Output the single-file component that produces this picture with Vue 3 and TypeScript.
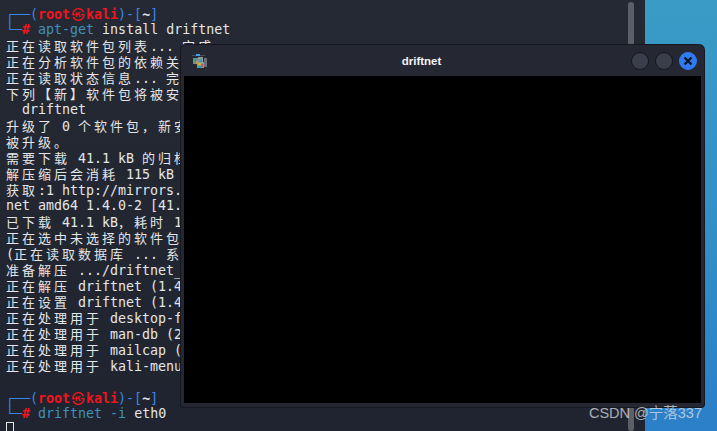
<script setup lang="ts">
type Run = { text: string; cjk: boolean }

const outputBefore: string[] = [
  '正在读取软件包列表... 完成',
  '正在分析软件包的依赖关',
  '正在读取状态信息... 完',
  '下列【新】软件包将被安',
  '  driftnet',
  '升级了 0 个软件包，新安',
  '被升级。',
  '需要下载 41.1 kB 的归档',
  '解压缩后会消耗 115 kB',
  '获取:1 http://mirrors.',
  'net amd64 1.4.0-2 [41.',
  '已下载 41.1 kB，耗时 1',
  '正在选中未选择的软件包',
  '(正在读取数据库 ... 系',
  '准备解压 .../driftnet_',
  '正在解压 driftnet (1.4',
  '正在设置 driftnet (1.4',
  '正在处理用于 desktop-f',
  '正在处理用于 man-db (2',
  '正在处理用于 mailcap (',
  '正在处理用于 kali-menu',
  ' ',
]

function split(line: string): Run[] {
  return line
    .split(/([\u3000-\u9fff\uff00-\uffef]+)/)
    .filter((t) => t.length > 0)
    .map((text) => ({ text, cjk: /[\u3000-\u9fff\uff00-\uffef]/.test(text) }))
}

const lines = outputBefore.map(split)

const iconPixels: [number, number, number, number, string][] = [
  [4, 0, 4, 2, '#3f9fe0'],
  [0, 1, 4, 1, '#4a4f5c'],
  [8, 1, 5, 1, '#4a4f5c'],
  [1, 4, 5, 6, '#6f8f86'],
  [2, 5, 2, 2, '#2f9f8f'],
  [4, 7, 2, 3, '#c0a050'],
  [6, 3, 5, 5, '#8f9aa0'],
  [7, 5, 3, 3, '#39a0b0'],
  [5, 8, 7, 6, '#7f9f90'],
  [6, 9, 3, 2, '#d0b040'],
  [9, 10, 2, 3, '#c05070'],
  [6, 12, 3, 2, '#30a0a0'],
  [12, 4, 3, 9, '#6b7078'],
]
</script>

<template>
  <div class="desktop">
    <section class="terminal">
      <div class="screen">
        <div class="line blue">┌──(<b class="red">root<i class="mark">㉿</i>kali</b>)-[<b class="white">~</b>]</div>
        <div class="line blue">└─<b class="red">#</b> <span class="cmd">apt-get</span> <span class="white">install driftnet</span></div>

        <div v-for="(runs, i) in lines" :key="i" class="line white">
          <span v-for="(run, j) in runs" :key="j" :class="{ cjk: run.cjk }">{{ run.text }}</span>
        </div>

        <div class="line blue">┌──(<b class="red">root<i class="mark">㉿</i>kali</b>)-[<b class="white">~</b>]</div>
        <div class="line blue">└─<b class="red">#</b> <span class="cmd">driftnet -i</span> <span class="white">eth0</span></div>
        <div class="line"><span class="cursor"></span></div>
      </div>

      <div class="gutter"><div class="thumb"></div></div>
    </section>

    <div class="wallpaper"></div>

    <article class="window">
      <header class="titlebar">
        <svg class="app-icon" width="16" height="15" viewBox="0 0 16 15" shape-rendering="crispEdges">
          <rect v-for="(p, i) in iconPixels" :key="i" :x="p[0]" :y="p[1]" :width="p[2]" :height="p[3]" :fill="p[4]" />
        </svg>
        <h1 class="title">driftnet</h1>
        <div class="controls">
          <span class="ctl"></span>
          <span class="ctl"></span>
          <span class="ctl close">
            <svg width="10" height="10" viewBox="0 0 10 10">
              <path d="M1.5 1.5 8.5 8.5M8.5 1.5 1.5 8.5" stroke="#0d1420" stroke-width="2.2" fill="none" />
            </svg>
          </span>
        </div>
      </header>
      <div class="canvas"></div>
    </article>

    <div class="watermark">CSDN @宁落337</div>
  </div>
</template>

<style scoped>
.desktop {
  position: relative;
  display: flex;
  width: 717px;
  height: 431px;
  overflow: hidden;
  background: #2f8cc4;
}
.terminal {
  position: relative;
  display: flex;
  flex: 0 0 645px;
  height: 431px;
  overflow: hidden;
  background: linear-gradient(180deg, #252934 0%, #222631 55%, #1f2430 100%);
  font-family: "DejaVu Sans Mono", "Noto Sans CJK SC", monospace;
  font-size: 13.3px;
  line-height: 16px;
}
.screen {
  flex: 1;
  min-width: 0;
  padding: 6px 0 0 6px;
  overflow: hidden;
}
.line {
  height: 16px;
  white-space: pre;
}
.blue { color: #3a86e8; }
.white { color: #e4e6e8; }
.red { color: #f0141c; font-weight: 700; }
.cmd { color: #4390b8; }
b.white { color: #e4e6e8; font-weight: 700; }
.mark {
  display: inline-block;
  width: 16px;
  font-style: normal;
  font-family: "Noto Sans CJK SC", sans-serif;
  font-size: 13px;
  text-align: center;
}
.cjk {
  font-family: "Noto Sans CJK SC", sans-serif;
  font-size: 13px;
  letter-spacing: 3px;
  line-height: 16px;
}
.cursor {
  display: block;
  width: 8px;
  height: 14px;
  border: 1px solid #e4e6e8;
  box-sizing: border-box;
}
.gutter {
  flex: 0 0 23px;
  box-sizing: border-box;
  padding: 2px 11px 0 6px;
}
.thumb {
  width: 6px;
  height: 429px;
  border-radius: 3px;
  background: #5b6068;
}
.wallpaper {
  flex: 1;
  background: linear-gradient(180deg, #3a9bc6 0%, #3291c6 50%, #2b7fc8 100%);
}
.window {
  position: absolute;
  left: 181px;
  top: 45px;
  width: 523px;
  height: 362px;
  display: flex;
  flex-direction: column;
  box-sizing: border-box;
  padding: 0 3px 4px;
  background: #252833;
  border-radius: 5px 5px 3px 3px;
  box-shadow: 0 0 0 1px #15181f;
}
.titlebar {
  position: relative;
  flex: 0 0 31px;
  display: flex;
  align-items: center;
  justify-content: space-between;
  padding: 0 4px 0 8px;
}
.app-icon { margin-top: 2px; }
.title {
  position: absolute;
  left: 0;
  right: 42px;
  margin: 0;
  text-align: center;
  color: #f2f3f5;
  font-family: "Liberation Sans", sans-serif;
  font-size: 11.5px;
  font-weight: 700;
  line-height: 14px;
}
.controls {
  position: relative;
  display: flex;
  gap: 6px;
}
.ctl {
  display: flex;
  align-items: center;
  justify-content: center;
  width: 18px;
  height: 18px;
  box-sizing: border-box;
  border-radius: 50%;
  border: 1px solid #14161c;
  background: #3a3e4b;
}
.close {
  border-color: #2f7bf2;
  background: #2f7bf2;
}
.canvas {
  flex: 1;
  background: #000;
}
.watermark {
  position: absolute;
  right: 15px;
  bottom: 9px;
  color: rgba(225, 228, 232, 0.72);
  font-family: "Liberation Sans", "Noto Sans CJK SC", sans-serif;
  font-size: 14.5px;
  line-height: 18px;
  white-space: nowrap;
}
</style>
